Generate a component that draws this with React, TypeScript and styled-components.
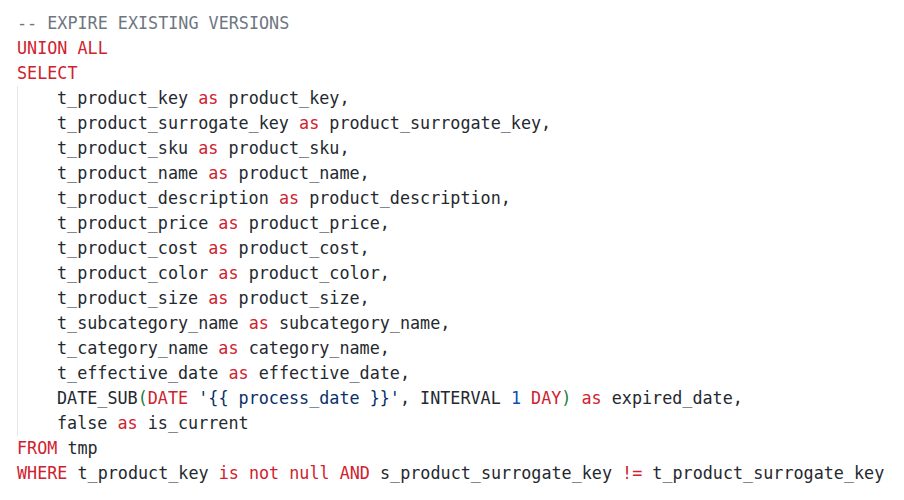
import React from "react";
import styled, { createGlobalStyle } from "styled-components";

const Global = createGlobalStyle`
  html, body { margin: 0; padding: 0; background: #ffffff; }
`;

const Code = styled.div`
  box-sizing: border-box;
  width: 904px;
  height: 500px;
  padding: 11px 0 0 17px;
  background: #ffffff;
  font-family: "DejaVu Sans Mono", "Liberation Mono", monospace;
  font-size: 16.75px;
  line-height: 25px;
  color: #24292f;
  white-space: pre;
`;

const Line = styled.div`
  height: 25px;
`;

const Indent = styled.div`
  border-left: 1px solid #e4e6e9;
  padding-left: 39px;
  margin: 0;
`;

const Kw = styled.span`color: #cf222e;`;
const Cm = styled.span`color: #6e7781;`;
const Str = styled.span`color: #0a3069;`;
const Num = styled.span`color: #0550ae;`;
const Paren = styled.span`color: #1a7f37;`;

const aliases: [string, string][] = [
  ["t_product_key", "product_key"],
  ["t_product_surrogate_key", "product_surrogate_key"],
  ["t_product_sku", "product_sku"],
  ["t_product_name", "product_name"],
  ["t_product_description", "product_description"],
  ["t_product_price", "product_price"],
  ["t_product_cost", "product_cost"],
  ["t_product_color", "product_color"],
  ["t_product_size", "product_size"],
  ["t_subcategory_name", "subcategory_name"],
  ["t_category_name", "category_name"],
  ["t_effective_date", "effective_date"],
];

export default function App() {
  return (
    <>
      <Global />
      <Code>
        <Line><Cm>-- EXPIRE EXISTING VERSIONS</Cm></Line>
        <Line><Kw>UNION ALL</Kw></Line>
        <Line><Kw>SELECT</Kw></Line>
        <Indent>
          {aliases.map(([a, b]) => (
            <Line key={a}>
              {a} <Kw>as</Kw> {b},
            </Line>
          ))}
          <Line>
            DATE_SUB<Paren>(</Paren><Kw>DATE</Kw> <Str>'{"{{"} process_date {"}}"}'</Str>, INTERVAL <Num>1</Num> <Kw>DAY</Kw><Paren>)</Paren> <Kw>as</Kw> expired_date,
          </Line>
          <Line>
            false <Kw>as</Kw> is_current
          </Line>
        </Indent>
        <Line><Kw>FROM</Kw> tmp</Line>
        <Line>
          <Kw>WHERE</Kw> t_product_key <Kw>is not null AND</Kw> s_product_surrogate_key <Kw>!=</Kw> t_product_surrogate_key
        </Line>
      </Code>
    </>
  );
}
